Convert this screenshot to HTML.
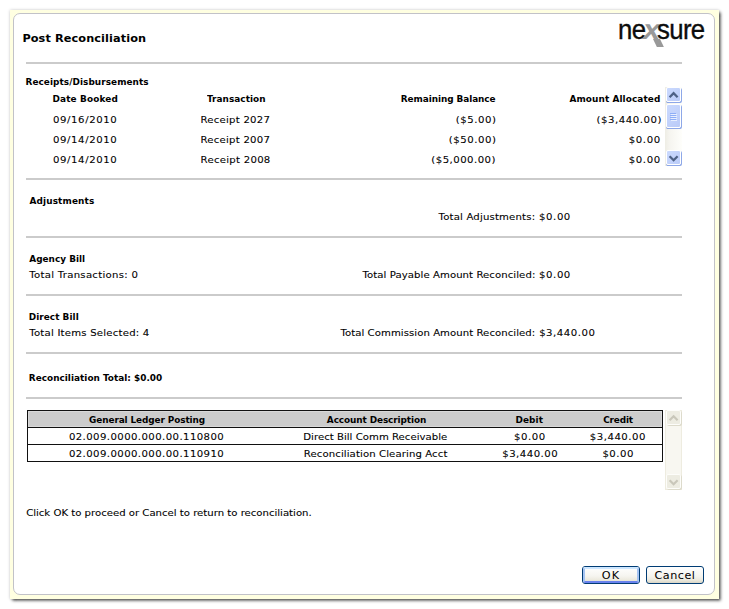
<!DOCTYPE html>
<html>
<head>
<meta charset="utf-8">
<title>Post Reconciliation</title>
<style>
html,body{margin:0;padding:0;background:#fff;}
body{width:729px;height:609px;position:relative;overflow:hidden;font-family:"DejaVu Sans","Liberation Sans",sans-serif;color:#000;}
#frame{position:absolute;left:10px;top:10px;width:709px;height:589px;background:#ffffe1;box-shadow:1.5px 1.5px 3px rgba(0,0,0,.72),0 0 3px rgba(0,0,0,.2);}
#panel{position:absolute;left:13px;top:13px;width:700px;height:580px;background:#fff;border:1px solid #c2c2c8;border-radius:7px;}
.hr{position:absolute;left:26px;width:656px;height:2px;background:#cbcbcb;}
.x{position:absolute;white-space:pre;line-height:14px;font-size:9.4px;color:#0a0a14;}
.b{font-family:"DejaVu Sans Condensed","DejaVu Sans",sans-serif;font-stretch:condensed;font-weight:bold;color:#000;transform:scaleX(1.055);transform-origin:0 0;}
.r{font-family:"DejaVu Sans",sans-serif;color:#000;-webkit-text-stroke:.09px #000;transform:scaleX(1.08);transform-origin:0 0;}
.t{font-family:"DejaVu Sans",sans-serif;font-weight:bold;font-size:11.3px;color:#000;}
.bt{font-family:"DejaVu Sans",sans-serif;font-size:11.2px;color:#000;}
#gl{position:absolute;left:27px;top:410px;width:634px;height:50px;border:1px solid #111;background:#fff;}
#gl .hd{position:absolute;left:0;top:0;width:634px;height:16px;background:#cccccc;box-shadow:inset 0 0 0 1px #d9d9d9;}
#gl .ln{position:absolute;left:0;width:634px;height:1px;background:#111;}
.btn{position:absolute;top:566px;width:56px;height:16px;box-sizing:content-box;padding:0;margin:0;font:inherit;text-align:left;overflow:visible;-webkit-appearance:none;appearance:none;border:1px solid #003c74;border-radius:3px;background:linear-gradient(#ffffff,#f6f5f0 55%,#eceadf 80%,#d9d5c6);}
#okb{left:582px;}
#okb::before{content:"";position:absolute;left:0;top:0;right:0;bottom:0;border-radius:2px;border:2px solid;border-color:#cee7ff #a6c4f2 #6982ee #a6c4f2;}
#cab{left:646px;}
.lg{position:absolute;top:14.2px;font-family:"Liberation Sans",sans-serif;font-size:28px;line-height:32px;color:#0c0c0c;white-space:pre;letter-spacing:-.7px;-webkit-text-stroke:.35px #0c0c0c;transform:scaleX(.92);transform-origin:0 0;}
.lx{position:absolute;left:640.3px;top:13.5px;font-family:"Liberation Sans",sans-serif;font-weight:bold;font-size:28px;line-height:32px;color:#999;transform:skewX(-12deg) scaleX(1.1);transform-origin:0 100%;}
.lxt{position:absolute;left:652.5px;top:38.5px;width:6.5px;height:8.3px;background:#999;transform:skewX(26deg);transform-origin:0 0;}
.trk{position:absolute;left:665px;width:17px;background:linear-gradient(90deg,#eeede5,#f6f5f0 30%,#fefefb);}
.trk.dis{background:#f8f7f1;box-shadow:inset 0 0 0 1px #eeece0;}
.sbt{position:absolute;left:666px;width:13px;border:1px solid #fff;border-radius:2px;background:linear-gradient(135deg,#cbdafe,#bacbf8);box-shadow:1px 1px 0 #8ea8e8,0 1px 0 #7d99e0;}
.sbt.dis{background:#edece2;border-color:#fdfdfa;box-shadow:1px 1px 0 #dddbcc;}
.ic{position:absolute;}
.grip{position:absolute;left:670px;width:6px;height:1px;background:#8eaef6;box-shadow:1px 1px 0 #e8efff;}
</style>
</head>
<body>
<div id="frame"></div>
<div id="panel"></div>
<div class="hr" style="top:62px"></div>
<div class="hr" style="top:178px"></div>
<div class="hr" style="top:236px"></div>
<div class="hr" style="top:294px"></div>
<div class="hr" style="top:352px"></div>
<div class="hr" style="top:397px"></div>
<div id="gl"><div class="hd"></div><div class="ln" style="top:16px"></div><div class="ln" style="top:33px"></div></div>
<div class="trk" style="top:87px;height:79px"></div>
<div class="sbt" style="top:87px;height:13px"></div>
<div class="sbt" style="top:104px;height:22px"></div>
<div class="sbt" style="top:150px;height:13px"></div>
<svg class="ic" style="left:666px;top:87px" width="16" height="16" viewBox="0 0 16 16"><path d="M3.6 10.2 L7.6 6.2 L11.6 10.2" fill="none" stroke="#4d6185" stroke-width="2.3"/></svg>
<svg class="ic" style="left:666px;top:150px" width="16" height="16" viewBox="0 0 16 16"><path d="M3.6 6.2 L7.6 10.2 L11.6 6.2" fill="none" stroke="#4d6185" stroke-width="2.3"/></svg>
<div class="grip" style="top:113px"></div><div class="grip" style="top:115px"></div><div class="grip" style="top:117px"></div><div class="grip" style="top:119px"></div>
<div class="trk dis" style="top:410px;height:80px"></div>
<div class="sbt dis" style="top:410px;height:13px"></div>
<div class="sbt dis" style="top:474px;height:13px"></div>
<svg class="ic" style="left:666px;top:410px" width="16" height="16" viewBox="0 0 16 16"><path d="M3.6 10.2 L7.6 6.2 L11.6 10.2" fill="none" stroke="#c9c7ba" stroke-width="2.2"/></svg>
<svg class="ic" style="left:666px;top:474px" width="16" height="16" viewBox="0 0 16 16"><path d="M3.6 6.2 L7.6 10.2 L11.6 6.2" fill="none" stroke="#c9c7ba" stroke-width="2.2"/></svg>
<div id="logo">
<span class="lg" id="lg1" style="left:618px">ne</span>
<span class="lx" id="lgx">x</span>
<span class="lxt"></span>
<span class="lg" id="lg2" style="left:657.2px">sure</span>
</div>
<button type="button" class="btn" id="okb"><span id="ok" class="x bt" style="left:18.73px;top:1.70px;letter-spacing:1.300px">OK</span></button>
<button type="button" class="btn" id="cab"><span id="cancel" class="x bt" style="left:7.53px;top:1.70px;letter-spacing:0.500px">Cancel</span></button>
<span id="title" class="x t" style="left:22.39px;top:32.00px;letter-spacing:0.097px">Post Reconciliation</span>
<span id="rd" class="x b" style="left:25px;top:75px;letter-spacing:0.061px;transform:matrix(1.055,0,0,1,0.48,0)">Receipts/Disbursements</span>
<span id="h1" class="x b" style="left:52px;top:92px;letter-spacing:0.144px;transform:matrix(1.055,0,0,1,0.44,0)">Date Booked</span>
<span id="h2" class="x b" style="left:207px;top:92px;letter-spacing:0.047px;transform:matrix(1.055,0,0,1,0.00,0)">Transaction</span>
<span id="h3" class="x b" style="left:400px;top:92px;letter-spacing:-0.059px;transform:matrix(1.055,0,0,1,0.73,0)">Remaining Balance</span>
<span id="h4" class="x b" style="left:569px;top:92px;letter-spacing:0.092px;transform:matrix(1.055,0,0,1,0.52,0)">Amount Allocated</span>
<span id="d1" class="x r" style="left:52px;top:113px;letter-spacing:0.572px;transform:matrix(1.08,0,0,1,0.89,0)">09/16/2010</span>
<span id="d2" class="x r" style="left:52px;top:133px;letter-spacing:0.572px;transform:matrix(1.08,0,0,1,0.89,0)">09/14/2010</span>
<span id="d3" class="x r" style="left:52px;top:153px;letter-spacing:0.572px;transform:matrix(1.08,0,0,1,0.89,0)">09/14/2010</span>
<span id="t1" class="x r" style="left:200px;top:113px;letter-spacing:0.212px;transform:matrix(1.08,0,0,1,0.53,0)">Receipt 2027</span>
<span id="t2" class="x r" style="left:200px;top:133px;letter-spacing:0.212px;transform:matrix(1.08,0,0,1,0.53,0)">Receipt 2007</span>
<span id="t3" class="x r" style="left:200px;top:153px;letter-spacing:0.248px;transform:matrix(1.08,0,0,1,0.54,0)">Receipt 2008</span>
<span id="r1" class="x r" style="left:455px;top:113px;letter-spacing:0.527px;transform:matrix(1.08,0,0,1,0.72,0)">($5.00)</span>
<span id="r2" class="x r" style="left:448px;top:133px;letter-spacing:0.532px;transform:matrix(1.08,0,0,1,0.70,0)">($50.00)</span>
<span id="r3" class="x r" style="left:431px;top:153px;letter-spacing:0.434px;transform:matrix(1.08,0,0,1,0.33,0)">($5,000.00)</span>
<span id="a1" class="x r" style="left:596px;top:113px;letter-spacing:0.516px;transform:matrix(1.08,0,0,1,0.40,0)">($3,440.00)</span>
<span id="a2" class="x r" style="left:628px;top:133px;letter-spacing:0.572px;transform:matrix(1.08,0,0,1,0.72,0)">$0.00</span>
<span id="a3" class="x r" style="left:628px;top:153px;letter-spacing:0.572px;transform:matrix(1.08,0,0,1,0.72,0)">$0.00</span>
<span id="adj" class="x b" style="left:29px;top:194px;letter-spacing:0.140px;transform:matrix(1.055,0,0,1,0.41,0)">Adjustments</span>
<span id="tadj" class="x r" style="left:438px;top:210px;letter-spacing:0.152px;transform:matrix(1.08,0,0,1,0.57,0)">Total Adjustments:</span>
<span id="tadjv" class="x r" style="left:539px;top:210px;letter-spacing:0.511px;transform:matrix(1.08,0,0,1,0.12,0)">$0.00</span>
<span id="ab" class="x b" style="left:29px;top:252px;letter-spacing:0.004px;transform:matrix(1.055,0,0,1,0.30,0)">Agency Bill</span>
<span id="tt" class="x r" style="left:29px;top:268px;letter-spacing:0.251px;transform:matrix(1.08,0,0,1,0.28,0)">Total Transactions: 0</span>
<span id="tp" class="x r" style="left:362px;top:268px;letter-spacing:0.060px;transform:matrix(1.08,0,0,1,0.45,0)">Total Payable Amount Reconciled:</span>
<span id="tpv" class="x r" style="left:539px;top:268px;letter-spacing:0.511px;transform:matrix(1.08,0,0,1,0.12,0)">$0.00</span>
<span id="db" class="x b" style="left:28px;top:310px;letter-spacing:0.053px;transform:matrix(1.055,0,0,1,0.71,0)">Direct Bill</span>
<span id="ti" class="x r" style="left:29px;top:326px;letter-spacing:0.196px;transform:matrix(1.08,0,0,1,0.25,0)">Total Items Selected: 4</span>
<span id="tc" class="x r" style="left:340px;top:326px;letter-spacing:0.045px;transform:matrix(1.08,0,0,1,0.46,0)">Total Commission Amount Reconciled:</span>
<span id="tcv" class="x r" style="left:539px;top:326px;letter-spacing:0.489px;transform:matrix(1.08,0,0,1,0.15,0)">$3,440.00</span>
<span id="rt" class="x b" style="left:28px;top:371px;letter-spacing:0.023px;transform:matrix(1.055,0,0,1,0.77,0)">Reconciliation Total: $0.00</span>
<span id="g1" class="x b" style="left:89px;top:413px;letter-spacing:-0.097px;transform:matrix(1.055,0,0,1,0.09,0)">General Ledger Posting</span>
<span id="g2" class="x b" style="left:326px;top:413px;letter-spacing:-0.092px;transform:matrix(1.055,0,0,1,0.86,0)">Account Description</span>
<span id="g3" class="x b" style="left:515px;top:413px;letter-spacing:0.065px;transform:matrix(1.055,0,0,1,0.51,0)">Debit</span>
<span id="g4" class="x b" style="left:603px;top:413px;letter-spacing:-0.142px;transform:matrix(1.055,0,0,1,0.16,0)">Credit</span>
<span id="l1" class="x r" style="left:68px;top:430px;letter-spacing:0.383px;transform:matrix(1.08,0,0,1,0.89,0)">02.009.0000.000.00.110800</span>
<span id="l2" class="x r" style="left:68px;top:447px;letter-spacing:0.383px;transform:matrix(1.08,0,0,1,0.89,0)">02.009.0000.000.00.110910</span>
<span id="c1" class="x r" style="left:303px;top:430px;letter-spacing:0.020px;transform:matrix(1.08,0,0,1,0.29,0)">Direct Bill Comm Receivable</span>
<span id="c2" class="x r" style="left:303px;top:447px;letter-spacing:0.090px;transform:matrix(1.08,0,0,1,0.74,0)">Reconciliation Clearing Acct</span>
<span id="e1" class="x r" style="left:513px;top:430px;letter-spacing:0.535px;transform:matrix(1.08,0,0,1,0.99,0)">$0.00</span>
<span id="e2" class="x r" style="left:502px;top:447px;letter-spacing:0.443px;transform:matrix(1.08,0,0,1,0.28,0)">$3,440.00</span>
<span id="f1" class="x r" style="left:589px;top:430px;letter-spacing:0.475px;transform:matrix(1.08,0,0,1,0.79,0)">$3,440.00</span>
<span id="f2" class="x r" style="left:602px;top:447px;letter-spacing:0.472px;transform:matrix(1.08,0,0,1,0.39,0)">$0.00</span>
<span id="msg" class="x r" style="left:26px;top:506px;letter-spacing:-0.007px;transform:matrix(1.08,0,0,1,0.13,0)">Click OK to proceed or Cancel to return to reconciliation.</span>
</body>
</html>
